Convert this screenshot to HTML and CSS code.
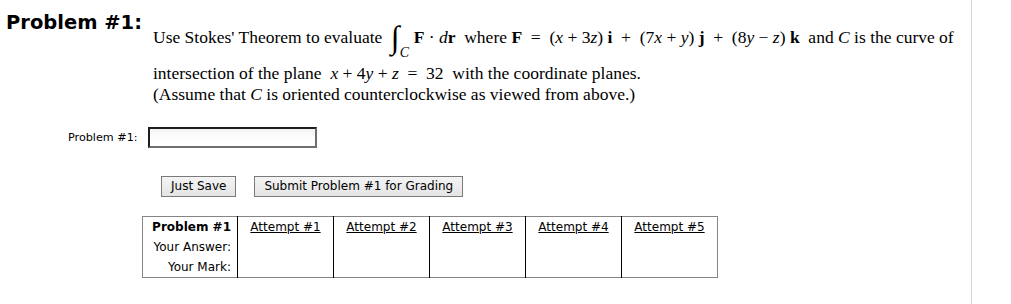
FILE: index.html
```html
<!DOCTYPE html>
<html>
<head>
<meta charset="utf-8">
<link rel="stylesheet" href="styles.css">
</head>
<body>
<div class="page">
  <div class="problem">
    <div class="ptitle">Problem #1:</div>
    <div class="ptext">
      <div class="line1">Use Stokes' Theorem to evaluate <span class="integral"><span class="int">∫</span><sub class="isub">C</sub></span><b>F</b> · <i>d</i><b>r</b> &nbsp;where <b>F</b> &nbsp;= &nbsp;(<i>x</i> + 3<i>z</i>) <b>i</b> &nbsp;+ &nbsp;(7<i>x</i> + <i>y</i>) <b>j</b> &nbsp;+ &nbsp;(8<i>y</i> − <i>z</i>) <b>k</b> &nbsp;and <i>C</i> is the curve of</div>
      <div class="line2">intersection of the plane &nbsp;<i>x</i> + 4<i>y</i> + <i>z</i> &nbsp;= &nbsp;32 &nbsp;with the coordinate planes.</div>
      <div class="line3">(Assume that <i>C</i> is oriented counterclockwise as viewed from above.)</div>
    </div>
  </div>
  <div class="answer">
    <span class="alabel">Problem #1:</span>
    <span class="abox"></span>
  </div>
  <div class="buttons">
    <span class="btn">Just Save</span>
    <span class="btn">Submit Problem #1 for Grading</span>
  </div>
  <table class="attempts">
    <tr>
      <th class="rowhead">Problem #1</th>
      <td><u>Attempt #1</u></td>
      <td><u>Attempt #2</u></td>
      <td><u>Attempt #3</u></td>
      <td><u>Attempt #4</u></td>
      <td><u>Attempt #5</u></td>
    </tr>
    <tr>
      <td class="rowhead">Your Answer:</td>
      <td></td><td></td><td></td><td></td><td></td>
    </tr>
    <tr>
      <td class="rowhead">Your Mark:</td>
      <td></td><td></td><td></td><td></td><td></td>
    </tr>
  </table>
</div>
</body>
</html>
```

FILE: styles.css
```css
html, body {
  margin: 0;
  padding: 0;
  background: #ffffff;
}
.page {
  width: 972px;
  height: 304px;
  border-right: 1px solid #d4d4d4;
  box-sizing: border-box;
  font-family: "DejaVu Sans", Verdana, sans-serif;
  color: #000;
  overflow: hidden;
}
.problem {
  display: flex;
  align-items: flex-start;
}
.ptitle {
  font-family: "DejaVu Sans", Verdana, sans-serif;
  font-weight: bold;
  font-size: 19.5px;
  width: 147px;
  padding-left: 6px;
  padding-top: 11px;
  line-height: 24px;
  white-space: nowrap;
}
.ptext {
  font-family: "Liberation Serif", "Times New Roman", serif;
  font-size: 17.5px;
  padding-top: 26px;
  white-space: nowrap;
}
.line1 {
  height: 37px;
  line-height: 22px;
}
.line2, .line3 {
  line-height: 21px;
}
.integral {
  display: inline-block;
  position: relative;
  width: 27px;
  height: 20px;
  vertical-align: -4px;
}
.int {
  font-size: 32px;
  line-height: 32px;
  position: absolute;
  left: 4px;
  top: -6px;
  font-family: "Liberation Serif", serif;
}
.isub {
  position: absolute;
  left: 13px;
  top: 19px;
  font-style: italic;
  font-size: 14px;
  line-height: 14px;
  font-family: "Liberation Serif", serif;
}
.answer {
  display: flex;
  align-items: center;
  margin-top: 22px;
  padding-left: 68px;
  height: 21px;
}
.alabel {
  font-size: 11.2px;
  width: 80px;
}
.abox {
  width: 165px;
  height: 17px;
  border: 2px solid;
  border-color: #1e1e1e #6e6e6e #6e6e6e #1e1e1e;
  background: linear-gradient(#f2f2f2, #fcfcfc 40%, #ffffff);
}
.buttons {
  display: flex;
  gap: 18px;
  margin-top: 28px;
  padding-left: 161px;
}
.btn {
  font-size: 12px;
  line-height: 19px;
  padding: 0 9px;
  border: 1px solid #7a7a7a;
  background: linear-gradient(#f4f4f4, #e4e4e4);
}
.attempts {
  margin-top: 19px;
  margin-left: 142px;
  border-collapse: collapse;
  border: 1px solid #858585;
  font-size: 12px;
}
.attempts th, .attempts td {
  padding: 0 6px;
  height: 20px;
  border-right: 1px solid #000;
  text-align: center;
  width: 83px;
  color: #000;
  white-space: nowrap;
}
.attempts .rowhead {
  text-align: right;
  width: 82px;
}
.attempts th.rowhead {
  font-weight: bold;
}
.attempts tr td:last-child {
  border-right: 1px solid #858585;
}
```
